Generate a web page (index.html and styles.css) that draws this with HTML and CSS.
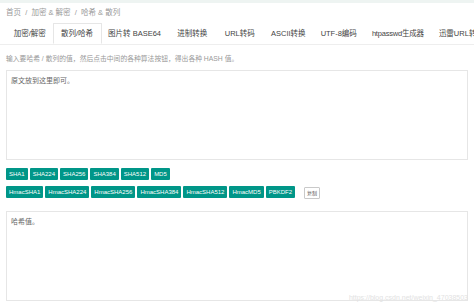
FILE: index.html
```
<!DOCTYPE html>
<html lang="zh">
<head>
    <meta charset="UTF-8">
    <title>哈希 & 散列</title>
    <link rel="stylesheet" href="styles.css">
</head>
<body>

<div class="topbar"></div>

<div class="page">
    <div class="crumb">首页 &nbsp;/&nbsp; 加密 &amp; 解密 &nbsp;/&nbsp; 哈希 &amp; 散列</div>

    <ul class="tabs">
        <li>加密/解密</li>
        <li class="on">散列/哈希</li>
        <li>图片转 BASE64</li>
        <li>进制转换</li>
        <li>URL转码</li>
        <li>ASCII转换</li>
        <li>UTF-8编码</li>
        <li class="narrow">htpasswd生成器</li>
        <li>迅雷URL转换</li>
    </ul>

    <p class="tip">输入要哈希 / 散列的值，然后点击中间的各种算法按钮，得出各种 HASH 值。</p>

    <div class="box">原文放到这里即可。</div>

    <div class="btns">
        <span class="btn">SHA1</span>
        <span class="btn">SHA224</span>
        <span class="btn">SHA256</span>
        <span class="btn">SHA384</span>
        <span class="btn">SHA512</span>
        <span class="btn">MD5</span>
    </div>
    <div class="btns">
        <span class="btn">HmacSHA1</span>
        <span class="btn">HmacSHA224</span>
        <span class="btn">HmacSHA256</span>
        <span class="btn">HmacSHA384</span>
        <span class="btn">HmacSHA512</span>
        <span class="btn">HmacMD5</span>
        <span class="btn">PBKDF2</span>
        <span class="btn plain">复制</span>
    </div>

    <div class="box">哈希值。</div>
</div>

<div class="mark">https://blog.csdn.net/weixin_47038503</div>

</body>
</html>
```

FILE: styles.css
```
body{
    margin: 0;
    width: 474px;
    height: 304px;
    overflow: hidden;
    background: #fff;
    font-family: "Liberation Sans", "Noto Sans CJK SC", sans-serif;
    color: #333;
    position: relative;
}

.topbar{
    height: 3px;
    background: #eef4f2;
}

.page{
    padding: 0 6px;
}

/*面包屑*/
.crumb{
    height: 20px;
    line-height: 20px;
    font-size: 7.5px;
    color: #999;
}

/*选项卡*/
.tabs{
    margin: 0 -6px;
    padding: 0 0 0 6px;
    list-style: none;
    display: flex;
    height: 21px;
    border-bottom: 1px solid #eee;
    white-space: nowrap;
    overflow: hidden;
}
.tabs li{
    flex-shrink: 0;
    padding: 0 7.5px;
    min-width: 32.5px;
    text-align: center;
    line-height: 21px;
    font-size: 7.5px;
    color: #444;
}
.tabs li.narrow{
    letter-spacing: -0.2px;
}
.tabs li.on{
    height: 21px;
    border: 1px solid #e6e6e6;
    border-bottom-color: #fff;
    border-radius: 1px 1px 0 0;
    line-height: 20px;
    margin: 0 -1px;
    box-sizing: border-box;
    background: #fff;
}

.tip{
    margin: 0;
    height: 25px;
    line-height: 28px;
    font-size: 6.8px;
    color: #999;
}

.box{
    height: 90px;
    border: 1px solid #e6e6e6;
    padding: 5px 4px;
    box-sizing: border-box;
    font-size: 7px;
    line-height: 9px;
    color: #666;
}

/*按钮*/
.btns{
    display: flex;
    gap: 2px;
    margin-top: 8px;
}
.btns + .btns{
    margin-top: 6px;
}
.btns + .box{
    margin-top: 12px;
}
.btn{
    height: 12px;
    line-height: 12px;
    padding: 0 3px;
    font-size: 6px;
    color: #fff;
    background: #009688;
    border-radius: 1px;
}
.btn.plain{
    height: 10px;
    line-height: 10px;
    margin-top: 1px;
    margin-left: 7px;
    padding: 0 2px;
    border: 1px solid #c9c9c9;
    background: #fff;
    color: #555;
    font-size: 5px;
}

.mark{
    position: absolute;
    right: 6px;
    bottom: 3px;
    font-size: 7px;
    color: #e2e2e2;
}
```
